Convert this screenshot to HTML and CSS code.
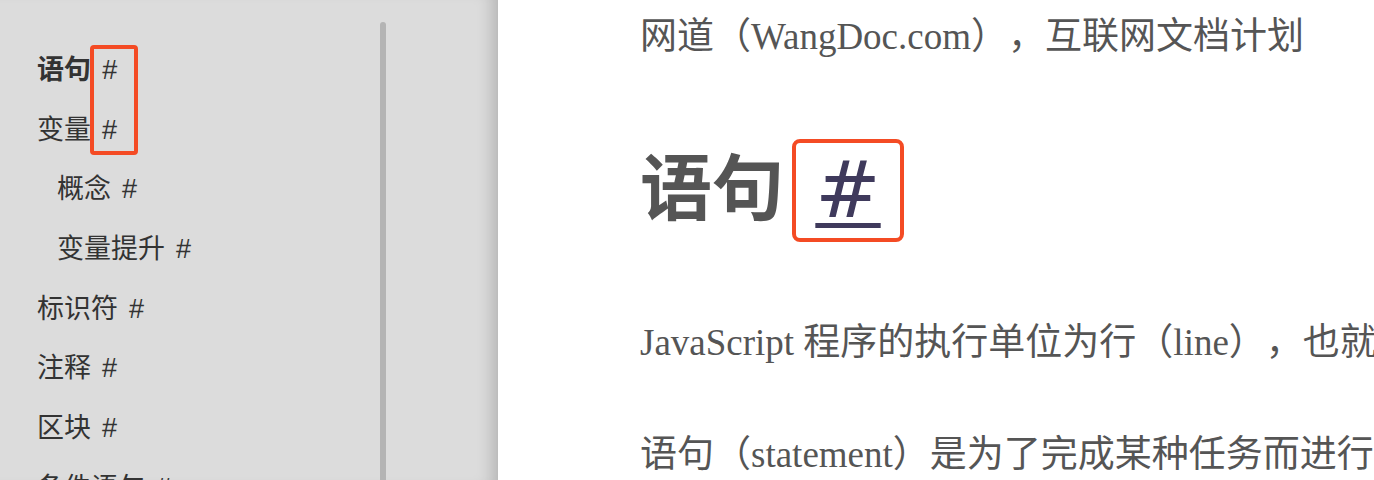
FILE: index.html
```html
<!DOCTYPE html>
<html lang="zh">
<head>
<meta charset="utf-8">
<title>语句 - 网道</title>
<link rel="stylesheet" href="styles.css">
</head>
<body>
<div class="page">
  <aside class="sidebar">
    <ul class="toc">
      <li class="toc-item bold">语句 <a class="toc-anchor">#</a></li>
      <li class="toc-item">变量 <a class="toc-anchor">#</a></li>
      <li class="toc-item sub">概念 <a class="toc-anchor">#</a></li>
      <li class="toc-item sub">变量提升 <a class="toc-anchor">#</a></li>
      <li class="toc-item">标识符 <a class="toc-anchor">#</a></li>
      <li class="toc-item">注释 <a class="toc-anchor">#</a></li>
      <li class="toc-item">区块 <a class="toc-anchor">#</a></li>
      <li class="toc-item">条件语句 <a class="toc-anchor">#</a></li>
    </ul>
    <div class="mark-box"></div>
    <div class="scrollbar"></div>
  </aside>
  <main class="content">
    <p class="para lead">网道（WangDoc.com），互联网文档计划</p>
    <h1 class="title">语句 <span class="heading-mark"><a class="heading-anchor" href="#">#</a></span></h1>
    <p class="para">JavaScript 程序的执行单位为行（line），也就是说，一般情况下，每一行就是一个语句。</p>
    <p class="para">语句（statement）是为了完成某种任务而进行的操作，比如下面就是一行赋值语句。</p>
  </main>
</div>
</body>
</html>
```

FILE: styles.css
```css
html, body {
  margin: 0;
  padding: 0;
  background: #ffffff;
}

.page {
  display: flex;
  width: 1374px;
  height: 480px;
  overflow: hidden;
}

.sidebar {
  position: relative;
  flex: 0 0 498px;
  height: 480px;
  background: #dcdcdc;
  box-shadow: inset -18px 0 16px -12px rgba(0, 0, 0, 0.18);
  overflow: hidden;
}

.toc {
  list-style: none;
  margin: 0;
  padding: 38px 0 0 37px;
  font-family: "Noto Sans CJK SC", "Noto Sans", sans-serif;
  font-size: 27px;
  color: #333333;
}

.toc-item {
  height: 59.7px;
  line-height: 60px;
  white-space: nowrap;
}

.toc-item.bold {
  font-weight: 700;
}

.toc-item.sub {
  padding-left: 20px;
}

.toc-anchor {
  color: #333333;
  font-family: "Liberation Sans", "Noto Sans", sans-serif;
  font-weight: 400;
  font-size: 27px;
  margin-left: 5px;
}

.mark-box {
  position: absolute;
  left: 90px;
  top: 45px;
  width: 40px;
  height: 102px;
  border: 4px solid #f44b24;
  border-radius: 4px;
}

.scrollbar {
  position: absolute;
  left: 380px;
  top: 22px;
  width: 6px;
  height: 470px;
  background: #b4b4b4;
  border-radius: 3px;
}

.content {
  flex: 1;
  padding-left: 142px;
  padding-top: 9px;
  color: #555555;
  font-family: "Liberation Serif", "Noto Sans CJK SC", serif;
  white-space: nowrap;
  overflow: hidden;
  text-spacing-trim: space-all;
}

.para {
  margin: 0 0 56px;
  font-size: 37px;
  line-height: 56px;
}

.para.lead {
  margin-bottom: 75px;
}

.title {
  margin: 0 0 75px;
  font-size: 72px;
  line-height: 100px;
  height: 100px;
  font-weight: 700;
  display: flex;
  align-items: center;
}

.heading-mark {
  display: inline-flex;
  align-items: center;
  justify-content: center;
  box-sizing: border-box;
  width: 112px;
  height: 103px;
  margin-left: 8px;
  border: 4px solid #f44b24;
  border-radius: 8px;
}

.heading-anchor {
  color: #3f3a5c;
  font-family: "DejaVu Serif", "Liberation Serif", serif;
  font-weight: 400;
  font-size: 78px;
  line-height: 1;
  text-decoration: underline;
  text-decoration-thickness: 5px;
  text-underline-offset: 6px;
}
```
